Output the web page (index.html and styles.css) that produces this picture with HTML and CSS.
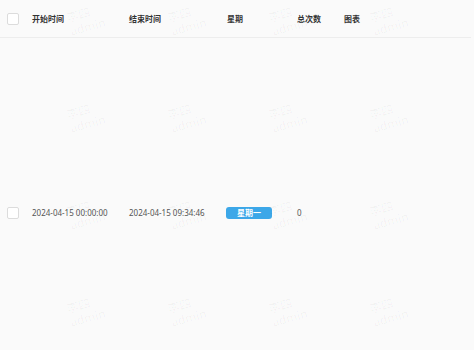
FILE: index.html
```html
<!DOCTYPE html>
<html lang="zh-CN">
<head>
<meta charset="utf-8">
<title>统计表</title>
<link rel="stylesheet" href="styles.css">
</head>
<body>
<div class="table">
  <div class="row head">
    <div class="cell check"><span class="box"></span></div>
    <div class="cell">开始时间</div>
    <div class="cell">结束时间</div>
    <div class="cell">星期</div>
    <div class="cell">总次数</div>
    <div class="cell">图表</div>
  </div>
  <div class="row body">
    <div class="cell check"><span class="box"></span></div>
    <div class="cell">2024-04-15 00:00:00</div>
    <div class="cell">2024-04-15 09:34:46</div>
    <div class="cell"><span class="tag">星期一</span></div>
    <div class="cell">0</div>
    <div class="cell"></div>
  </div>
</div>
<div class="watermarks">
  <div class="wm"><span>李四</span><span>admin</span></div>
  <div class="wm"><span>李四</span><span>admin</span></div>
  <div class="wm"><span>李四</span><span>admin</span></div>
  <div class="wm"><span>李四</span><span>admin</span></div>
  <div class="wm"><span>李四</span><span>admin</span></div>
  <div class="wm"><span>李四</span><span>admin</span></div>
  <div class="wm"><span>李四</span><span>admin</span></div>
  <div class="wm"><span>李四</span><span>admin</span></div>
  <div class="wm"><span>李四</span><span>admin</span></div>
  <div class="wm"><span>李四</span><span>admin</span></div>
  <div class="wm"><span>李四</span><span>admin</span></div>
  <div class="wm"><span>李四</span><span>admin</span></div>
  <div class="wm"><span>李四</span><span>admin</span></div>
  <div class="wm"><span>李四</span><span>admin</span></div>
  <div class="wm"><span>李四</span><span>admin</span></div>
  <div class="wm"><span>李四</span><span>admin</span></div>
</div>
</body>
</html>
```
FILE: styles.css
```css
html, body {
  margin: 0;
  padding: 0;
  background: #fafafa;
  font-family: "Noto Sans", "Noto Sans CJK SC", sans-serif;
  overflow: hidden;
  height: 350px;
}
.table {
  width: 471px;
}
.row {
  display: grid;
  grid-template-columns: 32px 97px 98px 70px 47px 1fr;
  align-items: center;
}
.head {
  height: 37px;
  border-bottom: 1px solid #ededed;
  font-size: 8px;
  font-weight: 700;
  color: #333;
}
.body {
  height: 312px;
  align-items: start;
  padding-top: 169px;
  box-sizing: border-box;
  font-size: 8px;
  color: #555;
}
.cell {
  white-space: nowrap;
  line-height: 12px;
}
.check {
  display: flex;
  padding-left: 7px;
}
.box {
  width: 10px;
  height: 10px;
  border: 1px solid #dcdcdc;
  border-radius: 2px;
  background: #fff;
}
.tag {
  display: inline-block;
  margin-left: -1px;
  width: 46px;
  height: 12px;
  line-height: 12px;
  border-radius: 3px;
  background: #3ca7e8;
  color: #fff;
  text-align: center;
  font-size: 8px;
  font-weight: 700;
}
.watermarks {
  position: absolute;
  left: 62px;
  top: 0;
  height: 350px;
  overflow: hidden;
  display: grid;
  grid-template-columns: repeat(4, 101px);
  grid-auto-rows: 97px;
  pointer-events: none;
}
.wm {
  display: flex;
  flex-direction: column;
  transform: rotate(-15deg);
  transform-origin: left top;
  color: rgba(0, 0, 0, 0.04);
  font-size: 12px;
  line-height: 14px;
  padding-top: 11px;
  font-family: "Noto Sans CJK SC", sans-serif;
}
```
